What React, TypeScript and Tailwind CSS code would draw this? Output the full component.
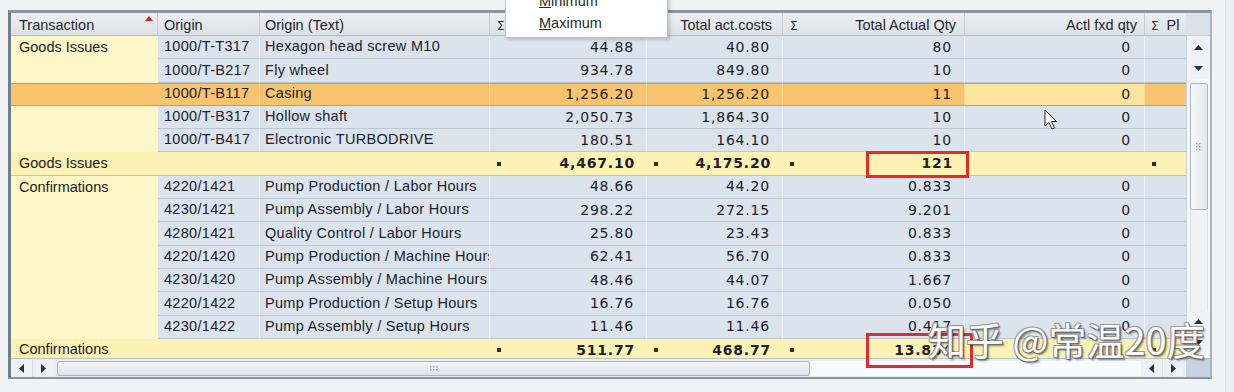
import React from 'react';

type Row = {
  kind: 'data' | 'sel' | 'sum';
  t?: string;
  o?: string;
  ot?: string;
  a: string;
  b: string;
  c: string;
  d?: string;
};

const rows: Row[] = [
  { kind: 'data', t: 'Goods Issues', o: '1000/T-T317', ot: 'Hexagon head screw M10', a: '44.88', b: '40.80', c: '80', d: '0' },
  { kind: 'data', o: '1000/T-B217', ot: 'Fly wheel', a: '934.78', b: '849.80', c: '10', d: '0' },
  { kind: 'sel', o: '1000/T-B117', ot: 'Casing', a: '1,256.20', b: '1,256.20', c: '11', d: '0' },
  { kind: 'data', o: '1000/T-B317', ot: 'Hollow shaft', a: '2,050.73', b: '1,864.30', c: '10', d: '0' },
  { kind: 'data', o: '1000/T-B417', ot: 'Electronic TURBODRIVE', a: '180.51', b: '164.10', c: '10', d: '0' },
  { kind: 'sum', t: 'Goods Issues', a: '4,467.10', b: '4,175.20', c: '121' },
  { kind: 'data', t: 'Confirmations', o: '4220/1421', ot: 'Pump Production / Labor Hours', a: '48.66', b: '44.20', c: '0.833', d: '0' },
  { kind: 'data', o: '4230/1421', ot: 'Pump Assembly / Labor Hours', a: '298.22', b: '272.15', c: '9.201', d: '0' },
  { kind: 'data', o: '4280/1421', ot: 'Quality Control / Labor Hours', a: '25.80', b: '23.43', c: '0.833', d: '0' },
  { kind: 'data', o: '4220/1420', ot: 'Pump Production / Machine Hours', a: '62.41', b: '56.70', c: '0.833', d: '0' },
  { kind: 'data', o: '4230/1420', ot: 'Pump Assembly / Machine Hours', a: '48.46', b: '44.07', c: '1.667', d: '0' },
  { kind: 'data', o: '4220/1422', ot: 'Pump Production / Setup Hours', a: '16.76', b: '16.76', c: '0.050', d: '0' },
  { kind: 'data', o: '4230/1422', ot: 'Pump Assembly / Setup Hours', a: '11.46', b: '11.46', c: '0.417', d: '0' },
  { kind: 'sum', t: 'Confirmations', a: '511.77', b: '468.77', c: '13.834' },
];

const NUM = "font-['DejaVu_Sans',sans-serif] text-[14px] tracking-[0.8px]";
const BASE = 'shrink-0 h-full flex items-center overflow-hidden whitespace-nowrap';
const DATA = 'bg-[#dbe4ed] border-b border-b-[#bac8d5] border-r border-r-[#eef3f7]';
const SEL = 'bg-[#f8c46d] border-y border-y-[#d79a42] border-r border-r-[#fbd896]';

function Sq() {
  return <span className="block w-[4px] h-[4px] bg-[#2e2e20]" />;
}

function Sigma() {
  return <span className="text-[12px] text-[#333] font-['DejaVu_Sans',sans-serif] leading-none">Σ</span>;
}

function Header() {
  const hc = 'shrink-0 h-full flex items-center overflow-hidden whitespace-nowrap border-r border-r-[#c3cbd3] pt-[4px]';
  return (
    <div className="flex h-[23px]">
      <div className="flex w-[1175px] h-full bg-gradient-to-b from-[#eceff2] to-[#dde2e7] border-b border-b-[#b3bdc7] text-[#1f262d]">
        <div className={`${hc} w-[147px] pl-[8px] relative`}>
          Transaction
          <svg className="absolute left-[134px] top-[3px]" width="8" height="5" viewBox="0 0 8 5">
            <polygon points="0,5 4,0 8,5" fill="#c62828" />
          </svg>
        </div>
        <div className={`${hc} w-[102px] pl-[6px]`}>Origin</div>
        <div className={`${hc} w-[230px] pl-[5px]`}>Origin (Text)</div>
        <div className={`${hc} w-[157px] pl-[7px] pr-[8px]`}>
          <Sigma />
        </div>
        <div className={`${hc} w-[136px] pl-[7px] pr-[10px] justify-between`}>
          <Sigma />
          <span>Total act.costs</span>
        </div>
        <div className={`${hc} w-[182px] pl-[7px] pr-[8px] justify-between`}>
          <Sigma />
          <span>Total Actual Qty</span>
        </div>
        <div className={`${hc} w-[180px] pr-[7px] justify-end`}>Actl fxd qty</div>
        <div className={`${hc} w-[41px] pl-[6px] gap-[8px] border-r-0`}>
          <Sigma />
          <span>Pl</span>
        </div>
      </div>
      <div className="w-[24px] h-full bg-[#dbe2e9] border-b border-b-[#c3ccd5]" />
    </div>
  );
}

function SumNum({ w, v }: { w: string; v: string }) {
  return (
    <div className={`${w} ${BASE} pl-[7px] pr-[12px] justify-between`}>
      <Sq />
      <span className={`${NUM} font-bold`}>{v}</span>
    </div>
  );
}

function GridRow({ r }: { r: Row }) {
  if (r.kind === 'sum') {
    return (
      <div className="flex h-[23.3px] bg-[#fbf2b4] border-b border-b-[#cbc59f]">
        <div className={`w-[147px] ${BASE} pl-[8px]`}>{r.t}</div>
        <div className="w-[102px] shrink-0" />
        <div className="w-[230px] shrink-0" />
        <SumNum w="w-[157px]" v={r.a} />
        <SumNum w="w-[136px]" v={r.b} />
        <SumNum w="w-[182px]" v={r.c} />
        <div className="w-[180px] shrink-0" />
        <div className={`w-[41px] ${BASE} pl-[7px]`}>
          <Sq />
        </div>
      </div>
    );
  }
  const sel = r.kind === 'sel';
  const c = sel ? SEL : DATA;
  return (
    <div className="flex h-[23.3px]">
      <div
        className={`w-[147px] ${BASE} pl-[8px] ${
          sel ? 'bg-[#f8c46d] border-y border-y-[#d79a42]' : 'bg-[#fdf6c6]'
        }`}
      >
        {r.t}
      </div>
      <div className={`w-[102px] ${BASE} pl-[6px] tracking-[0.3px] ${c}`}>{r.o}</div>
      <div className={`w-[230px] ${BASE} pl-[5px] tracking-[0.3px] ${c}`}>{r.ot}</div>
      <div className={`w-[157px] ${BASE} justify-end pr-[12px] ${c}`}>
        <span className={NUM}>{r.a}</span>
      </div>
      <div className={`w-[136px] ${BASE} justify-end pr-[12px] ${c}`}>
        <span className={NUM}>{r.b}</span>
      </div>
      <div className={`w-[182px] ${BASE} justify-end pr-[12px] ${c}`}>
        <span className={NUM}>{r.c}</span>
      </div>
      <div
        className={`w-[180px] ${BASE} justify-end pr-[13px] ${
          sel ? 'bg-[#fde49c] border-y border-y-[#d79a42] border-r border-r-[#fbd896]' : DATA
        }`}
      >
        <span className={NUM}>{r.d}</span>
      </div>
      <div className={`w-[41px] ${BASE} ${c} border-r-0`} />
    </div>
  );
}

function Arrow({ dir }: { dir: 'up' | 'down' | 'left' | 'right' }) {
  const pts =
    dir === 'up'
      ? '0,5 4.5,0 9,5'
      : dir === 'down'
      ? '0,0 4.5,5 9,0'
      : dir === 'left'
      ? '5,0 0,4.5 5,9'
      : '0,0 5,4.5 0,9';
  const w = dir === 'up' || dir === 'down' ? 9 : 5;
  const h = dir === 'up' || dir === 'down' ? 5 : 9;
  return (
    <svg width={w} height={h} viewBox={`0 0 ${w} ${h}`}>
      <polygon points={pts} fill="#27313b" />
    </svg>
  );
}

function Grip({ vertical }: { vertical?: boolean }) {
  const dots = [];
  for (let i = 0; i < 3; i++) {
    for (let j = 0; j < 2; j++) {
      dots.push(
        <rect
          key={`${i}-${j}`}
          x={vertical ? j * 3 : i * 3}
          y={vertical ? i * 3 : j * 3}
          width="1.5"
          height="1.5"
          fill="#9aa7b4"
        />
      );
    }
  }
  return (
    <svg width={vertical ? 5 : 8} height={vertical ? 8 : 5}>
      {dots}
    </svg>
  );
}

function VScroll() {
  const btn = 'w-[20px] h-[21px] shrink-0 flex items-center justify-center bg-[#eef2f6]';
  return (
    <div className="w-[24px] h-full bg-[#f4f6f8] border-l border-l-[#c9d2db] flex flex-col items-center pt-[1px] pb-[5px]">
      <div className={btn}>
        <Arrow dir="up" />
      </div>
      <div className={btn}>
        <Arrow dir="down" />
      </div>
      <div className="mt-[4px] w-[18px] h-[127px] shrink-0 rounded-[2px] border border-[#aab6c2] bg-gradient-to-r from-[#f6f8fa] to-[#e2e8ee] flex items-center justify-center">
        <Grip vertical />
      </div>
      <div className="flex-1 w-[18px] bg-[#f0f3f6] border-x border-[#dde3e9]" />
      <div className={btn}>
        <Arrow dir="up" />
      </div>
      <div className={btn}>
        <Arrow dir="down" />
      </div>
    </div>
  );
}

function HScroll() {
  const btn = 'w-[21px] h-full shrink-0 flex items-center justify-center bg-[#edf1f5]';
  return (
    <div className="flex h-[19px]">
      <div className="w-[1175px] h-full flex items-center bg-[#e9eef3] border-t border-t-[#b6c1cc]">
        <div className={btn}>
          <Arrow dir="left" />
        </div>
        <div className={`${btn} border-l border-l-[#d6dde4]`}>
          <Arrow dir="right" />
        </div>
        <div className="ml-[4px] w-[753px] h-[15px] shrink-0 rounded-[3px] border border-[#a9b5c1] bg-gradient-to-b from-[#f5f7f9] to-[#dde4eb] flex items-center justify-center">
          <Grip />
        </div>
        <div className="flex-1 h-[15px] bg-[#f8fafb]" />
        <div className={btn}>
          <Arrow dir="left" />
        </div>
        <div className={`${btn} border-l border-l-[#d6dde4]`}>
          <Arrow dir="right" />
        </div>
        <div className="w-[3px]" />
      </div>
      <div className="w-[24px] h-full bg-[#c6d2dd] border-t border-t-[#b6c1cc]" />
    </div>
  );
}

export default function App() {
  return (
    <div className="relative w-[1234px] h-[392px] overflow-hidden bg-[#f0f2f4] font-['Liberation_Sans',Arial,sans-serif] text-[14.5px] text-[#1b2128]">
      <div className="absolute right-[0px] top-0 w-[9px] h-full bg-[#eceef0] border-l border-l-[#dfe2e5]" />
      <div className="pt-[10px] pl-[8px]">
        <div className="w-[1204px] border-l-[3px] border-t-[3px] border-b-[2px] border-r-[2px] border-l-[#707e8c] border-t-[#8995a1] border-b-[#8995a1] border-r-[#aab4be] bg-[#dce5ee]">
          <Header />
          <div className="flex h-[322px]">
            <div className="w-[1175px] h-full overflow-hidden">
              {rows.map((r, i) => (
                <GridRow key={i} r={r} />
              ))}
            </div>
            <VScroll />
          </div>
          <HScroll />
        </div>
      </div>

      {/* context menu */}
      <div className="absolute left-[505px] top-[-18px] w-[163px] h-[56px] bg-white border border-[#bcc4cc] shadow-[2px_2px_3px_rgba(0,0,0,0.18)] pt-[8px] text-[#2a2a2a]">
        <div className="h-[22px] flex items-center pl-[33px]">
          <span className="underline">M</span>inimum
        </div>
        <div className="h-[22px] flex items-center pl-[33px]">
          <span className="underline">M</span>aximum
        </div>
      </div>

      {/* red highlight boxes */}
      <div className="absolute left-[866px] top-[151px] w-[103px] h-[27px] border-[3px] border-[#e32b2b]" />
      <div className="absolute left-[866px] top-[333px] w-[107px] h-[35px] border-[3px] border-[#e32b2b]" />

      {/* mouse cursor */}
      <svg className="absolute left-[1044px] top-[109px]" width="14" height="22" viewBox="0 0 14 22">
        <path d="M1 1 L1 17 L5 13.5 L8 20 L10.5 19 L7.5 12.5 L12.5 12.5 Z" fill="#ffffff" stroke="#222" strokeWidth="1" strokeLinejoin="round" />
      </svg>

      {/* watermark */}
      <div className="absolute left-[928px] top-[320px] whitespace-nowrap text-[38px] leading-none text-[#fbfbfb] font-['Noto_Sans_CJK_SC',sans-serif] [text-shadow:1px_1px_0_#6e6e6e,2px_2px_2px_rgba(0,0,0,0.45),-1px_-1px_0_#9a9a9a,1px_-1px_0_#9a9a9a,-1px_1px_0_#9a9a9a]">
        知乎 @常温20度
      </div>
    </div>
  );
}
